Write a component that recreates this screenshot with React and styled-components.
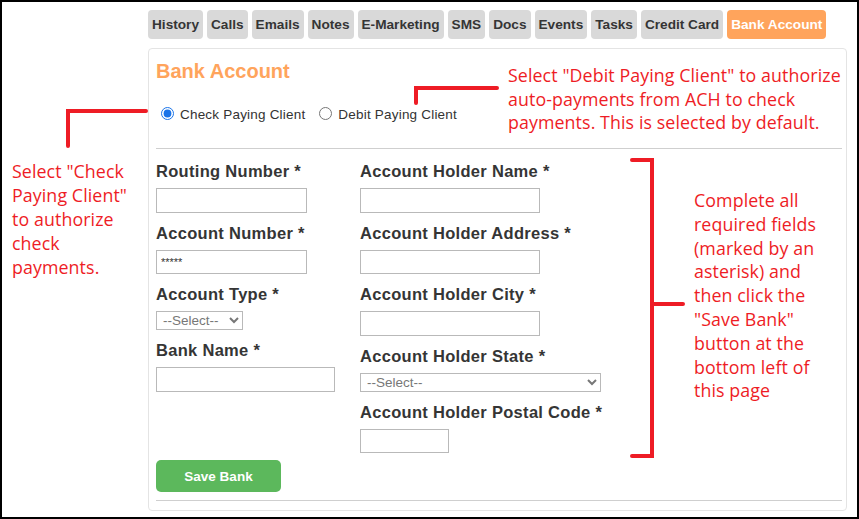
import React from 'react';
import styled, { createGlobalStyle } from 'styled-components';

// Globals

const GlobalStyle = createGlobalStyle`
	body {
		margin: 0;
		background: #fff;
		font-family: 'Liberation Sans', Arial, sans-serif;
	}
`;

// Layout

const Frame = styled.div`
	position: relative;
	width: 859px;
	height: 519px;
	box-sizing: border-box;
	border: 2px solid #000;
	background: #fff;
	display: grid;
	grid-template-columns: 146px 699px;
	overflow: hidden;
`;

const Main = styled.main`
	grid-column: 2;
	padding-top: 8px;
`;

const TabBar = styled.nav`
	display: flex;
	gap: 4px;
	height: 29px;
`;

const Tab = styled.span`
	display: block;
	padding: 0 4px;
	line-height: 29px;
	border-radius: 4px;
	font-size: 13.65px;
	font-weight: 700;
	white-space: nowrap;
	color: ${(p) => (p.$active ? '#fff' : '#353535')};
	background: ${(p) => (p.$active ? '#ffa45c' : '#d9d9d9')};
`;

const Panel = styled.section`
	margin-top: 9px;
	height: 463px;
	box-sizing: border-box;
	border: 1px solid #e4e4e4;
	border-radius: 4px;
	padding: 0 4px 0 7px;
`;

const Title = styled.h2`
	margin: 10px 0 0;
	font-size: 20px;
	line-height: 24px;
	font-weight: 700;
	color: #ffa45c;
`;

const RadioRow = styled.div`
	margin-top: 22px;
	display: flex;
	align-items: center;
	gap: 9px;
	height: 16px;
	font-size: 13.5px;
	letter-spacing: 0.2px;
	color: #333;
`;

const RadioLabel = styled.label`
	display: flex;
	align-items: center;

	input {
		margin: 0 3px 0 5px;
		width: 13px;
		height: 13px;
		accent-color: #1a73e8;
	}

	span {
		padding-left: 3px;
		line-height: 16px;
		position: relative;
		top: 2px;
	}
`;

const Rule = styled.hr`
	border: 0;
	border-top: 1px solid #cfcfcf;
	margin: ${(p) => p.$top}px 0 0;
`;

const FormGrid = styled.div`
	margin-top: 12px;
	display: grid;
	grid-template-columns: 204px 1fr;
	align-items: start;
`;

const Column = styled.div`
	display: flex;
	flex-direction: column;
	align-items: flex-start;
`;

const Label = styled.label`
	display: block;
	margin-top: ${(p) => (p.$first ? 0 : 10)}px;
	margin-bottom: 7px;
	font-size: 16.5px;
	letter-spacing: 0.3px;
	line-height: 20px;
	font-weight: 700;
	white-space: nowrap;
	color: #353535;
`;

const Input = styled.input`
	box-sizing: border-box;
	width: ${(p) => p.$w}px;
	height: ${(p) => p.$h || 24}px;
	margin: 0;
	padding: 0 4px;
	border: 1px solid #b9b9b9;
	border-radius: 0;
	font-family: 'Liberation Sans', Arial, sans-serif;
	font-size: 11px;
	color: #333;
	background: #fff;
	outline: none;
`;

const Select = styled.select`
	box-sizing: border-box;
	width: ${(p) => p.$w}px;
	height: 19px;
	margin: 0;
	padding: 0 0 0 2px;
	border: 1px solid #b9b9b9;
	border-radius: 0;
	font-family: 'Liberation Sans', Arial, sans-serif;
	font-size: 13.5px;
	color: #777;
	background: #fff;
`;

const SaveButton = styled.button`
	display: block;
	margin-top: 7px;
	width: 125px;
	height: 32px;
	border: 0;
	border-radius: 5px;
	background: #5cb85c;
	color: #fff;
	font-family: 'Liberation Sans', Arial, sans-serif;
	font-size: 13.5px;
	font-weight: 700;
`;

// Annotation layer (callouts drawn over the screenshot)

const Note = styled.p`
	position: absolute;
	left: ${(p) => p.$x}px;
	top: ${(p) => p.$y}px;
	margin: 0;
	font-family: 'Open Sans', Lato, sans-serif;
	font-size: 17.8px;
	letter-spacing: 0.1px;
	line-height: ${(p) => p.$lh || 24}px;
	color: #ee1c25;
	white-space: nowrap;
`;

const Connectors = styled.svg`
	position: absolute;
	left: -2px;
	top: -2px;
	pointer-events: none;
`;

const tabs = [
	'History',
	'Calls',
	'Emails',
	'Notes',
	'E-Marketing',
	'SMS',
	'Docs',
	'Events',
	'Tasks',
	'Credit Card',
	'Bank Account',
];

export default function App() {
	return (
		<>
			<GlobalStyle />
			<Frame>
				<Main>
					<TabBar>
						{tabs.map((t) => (
							<Tab key={t} $active={t === 'Bank Account'}>
								{t}
							</Tab>
						))}
					</TabBar>
					<Panel>
						<Title>Bank Account</Title>
						<RadioRow>
							<RadioLabel>
								<input type="radio" name="payer" defaultChecked />
								<span>Check Paying Client</span>
							</RadioLabel>
							<RadioLabel>
								<input type="radio" name="payer" />
								<span>Debit Paying Client</span>
							</RadioLabel>
						</RadioRow>
						<Rule $top={27} />
						<FormGrid>
							<Column>
								<Label $first>Routing Number *</Label>
								<Input $w={151} $h={25} />
								<Label>Account Number *</Label>
								<Input $w={151} defaultValue="*****" />
								<Label>Account Type *</Label>
								<Select $w={87}>
									<option>--Select--</option>
								</Select>
								<Label>Bank Name *</Label>
								<Input $w={179} $h={25} />
							</Column>
							<Column>
								<Label $first>Account Holder Name *</Label>
								<Input $w={180} $h={25} />
								<Label>Account Holder Address *</Label>
								<Input $w={180} />
								<Label>Account Holder City *</Label>
								<Input $w={180} $h={25} />
								<Label>Account Holder State *</Label>
								<Select $w={241}>
									<option>--Select--</option>
								</Select>
								<Label>Account Holder Postal Code *</Label>
								<Input $w={89} />
							</Column>
						</FormGrid>
						<SaveButton>Save Bank</SaveButton>
						<Rule $top={8} />
					</Panel>
				</Main>

				<Note $x={506} $y={62} $lh={23.5}>
					Select "Debit Paying Client" to authorize
					<br />
					auto-payments from ACH to check
					<br />
					payments. This is selected by default.
				</Note>
				<Note $x={10} $y={157}>
					Select "Check
					<br />
					Paying Client"
					<br />
					to authorize
					<br />
					check
					<br />
					payments.
				</Note>
				<Note $x={692} $y={187} $lh={23.8}>
					Complete all
					<br />
					required fields
					<br />
					(marked by an
					<br />
					asterisk) and
					<br />
					then click the
					<br />
					"Save Bank"
					<br />
					button at the
					<br />
					bottom left of
					<br />
					this page
				</Note>

				<Connectors width="859" height="519" viewBox="0 0 859 519">
					<g
						fill="none"
						stroke="#ee1c25"
						strokeWidth="4"
						strokeLinecap="round"
						strokeLinejoin="miter"
					>
						<path d="M68 146 V111 H146" />
						<path d="M416 103 V88 H497" />
						<path d="M632 160 H652 V456 H632 M652 304 H683" />
					</g>
				</Connectors>
			</Frame>
		</>
	);
}
